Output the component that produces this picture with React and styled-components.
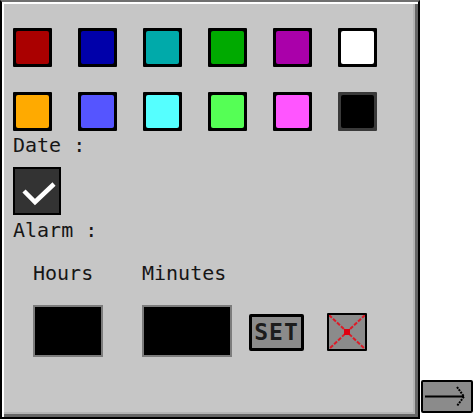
import React from "react";
import styled, { createGlobalStyle } from "styled-components";

const Global = createGlobalStyle`
  html, body { margin: 0; padding: 0; background: #ffffff; }
  body { font-family: "DejaVu Sans Mono", "Liberation Mono", monospace; }
`;

const Screen = styled.div`
  width: 474px;
  height: 420px;
  display: flex;
  align-items: flex-end;
`;

const Panel = styled.div`
  box-sizing: border-box;
  width: 420px;
  height: 419px;
  align-self: flex-start;
  background: #c6c6c6;
  border-top: 2px solid #707070;
  border-left: 2px solid #000;
  border-right: 2px solid #000;
  border-bottom: 2px solid #000;
  box-shadow: inset 2px 2px 0 #ffffff, inset -3px -3px 0 #666666, inset -5px -5px 0 #b4b4b4;
  padding: 26px 0 0 11px;
  display: flex;
  flex-direction: column;
  align-items: flex-start;
`;

const Palette = styled.div`
  display: grid;
  grid-template-columns: repeat(6, 39px);
  grid-auto-rows: 39px;
  column-gap: 26px;
  row-gap: 25px;
`;

const Swatch = styled.div`
  box-sizing: border-box;
  background: ${(p) => p.$edge};
  padding: 3px;
  border-radius: 1px;
  &::after {
    content: "";
    display: block;
    width: 100%;
    height: 100%;
    background: ${(p) => p.$color};
    border-radius: 2px;
  }
`;

const Label = styled.div`
  font-size: 20px;
  line-height: 20px;
  color: #161616;
  margin-top: ${(p) => p.$mt || 0}px;
  white-space: pre;
`;

const CheckBox = styled.div`
  box-sizing: border-box;
  width: 48px;
  height: 48px;
  margin-top: 12px;
  background: #333333;
  border: 2px solid #000;
  display: flex;
  svg { display: block; }
`;

const AlarmRow = styled.div`
  display: flex;
  align-items: flex-end;
  padding-left: 20px;
  margin-top: 23px;
`;

const TimeField = styled.div`
  display: flex;
  flex-direction: column;
  gap: 22px;
  margin-left: ${(p) => p.$ml || 0}px;
`;

const TimeBox = styled.div`
  box-sizing: border-box;
  width: ${(p) => p.$w}px;
  height: 52px;
  background: #000;
  border: 2px solid #7c7c7c;
`;

const SetButton = styled.div`
  box-sizing: border-box;
  width: 55px;
  height: 37px;
  margin-left: 17px;
  margin-bottom: 6px;
  background: #8b8b8b;
  border: 3px solid #000;
  border-radius: 2px;
  display: flex;
  align-items: center;
  justify-content: center;
  font-size: 23px;
  font-weight: bold;
  letter-spacing: 1px;
  color: #1c1c1c;
  line-height: 1;
`;

const ClearButton = styled.div`
  box-sizing: border-box;
  width: 40px;
  height: 38px;
  margin-left: 23px;
  margin-bottom: 6px;
  background: #8b8b8b;
  border: 2px solid #000;
  border-radius: 1px;
  svg { display: block; }
`;

const ArrowButton = styled.div`
  box-sizing: border-box;
  width: 52px;
  height: 33px;
  margin-left: 1px;
  margin-bottom: 7px;
  background: #8b8b8b;
  border: 2px solid #000;
  border-radius: 2px;
  svg { display: block; }
`;

const colors = [
  ["#aa0000", "#000"],
  ["#0000aa", "#000"],
  ["#00aaaa", "#000"],
  ["#00aa00", "#000"],
  ["#aa00aa", "#000"],
  ["#ffffff", "#000"],
  ["#ffaa00", "#000"],
  ["#5555ff", "#000"],
  ["#55ffff", "#000"],
  ["#55ff55", "#000"],
  ["#ff55ff", "#000"],
  ["#000000", "#3a3a3a"],
];

export default function App() {
  return (
    <>
      <Global />
      <Screen>
        <Panel>
          <Palette>
            {colors.map(([c, e], i) => (
              <Swatch key={i} $color={c} $edge={e} />
            ))}
          </Palette>
          <Label $mt={4}>Date :</Label>
          <CheckBox>
            <svg width="44" height="44" viewBox="0 0 44 44">
              <polyline
                points="9,22 20,33 39,15"
                fill="none"
                stroke="#ffffff"
                strokeWidth="4.5"
                strokeLinejoin="miter"
              />
            </svg>
          </CheckBox>
          <Label $mt={5}>Alarm :</Label>
          <AlarmRow>
            <TimeField>
              <Label>Hours</Label>
              <TimeBox $w={70} />
            </TimeField>
            <TimeField $ml={39}>
              <Label>Minutes</Label>
              <TimeBox $w={90} />
            </TimeField>
            <SetButton>SET</SetButton>
            <ClearButton>
              <svg width="36" height="34" viewBox="0 0 36 34">
                <line x1="0" y1="0" x2="36" y2="34" stroke="#dc1c28" strokeWidth="2" strokeDasharray="4 1.5" />
                <line x1="36" y1="0" x2="0" y2="34" stroke="#dc1c28" strokeWidth="2" strokeDasharray="4 1.5" />
                <rect x="15" y="14" width="6" height="6" fill="#e00010" />
              </svg>
            </ClearButton>
          </AlarmRow>
        </Panel>
        <ArrowButton>
          <svg width="48" height="29" viewBox="0 0 48 29">
            <line x1="2" y1="14.5" x2="41" y2="14.5" stroke="#000" strokeWidth="2" />
            <polyline points="34,5 41,14.5 34,24" fill="none" stroke="#000" strokeWidth="2" strokeDasharray="2 1" />
          </svg>
        </ArrowButton>
      </Screen>
    </>
  );
}
